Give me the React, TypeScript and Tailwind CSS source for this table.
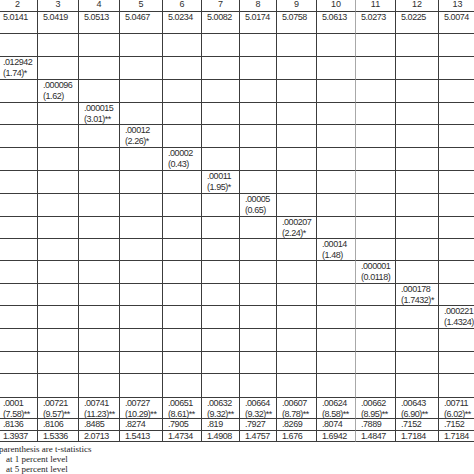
import React from "react";

const cols = [2, 3, 4, 5, 6, 7, 8, 9, 10, 11, 12, 13];

const row1 = ["5.0141", "5.0419", "5.0513", "5.0467", "5.0234", "5.0082", "5.0174", "5.0758", "5.0613", "5.0273", "5.0225", "5.0074"];

const diag: [string, string][] = [
  [".012942", "(1.74)*"],
  [".000096", "(1.62)"],
  [".000015", "(3.01)**"],
  [".00012", "(2.26)*"],
  [".00002", "(0.43)"],
  [".00011", "(1.95)*"],
  [".00005", "(0.65)"],
  [".000207", "(2.24)*"],
  [".00014", "(1.48)"],
  [".000001", "(0.0118)"],
  [".000178", "(1.7432)*"],
  [".000221", "(1.4324)"],
];

const coef: [string, string][] = [
  [".0001", "(7.58)**"],
  [".00721", "(9.57)**"],
  [".00741", "(11.23)**"],
  [".00727", "(10.29)**"],
  [".00651", "(8.61)**"],
  [".00632", "(9.32)**"],
  [".00664", "(9.32)**"],
  [".00607", "(8.78)**"],
  [".00624", "(8.58)**"],
  [".00662", "(8.95)**"],
  [".00643", "(6.90)**"],
  [".00711", "(6.02)**"],
];

const r2 = [".8136", ".8106", ".8485", ".8274", ".7905", ".819", ".7927", ".8269", ".8074", ".7889", ".7152", ".7152"];
const dw = ["1.3937", "1.5336", "2.0713", "1.5413", "1.4734", "1.4908", "1.4757", "1.676", "1.6942", "1.4847", "1.7184", "1.7184"];

function bl(ci: number) {
  return ci === 9 ? "border-l-[#a8a8a8]" : "border-l-[#3c3c3c]";
}

function Cell({ ci, children, last }: { ci: number; children?: React.ReactNode; last?: boolean }) {
  return (
    <div
      className={
        "border-l border-t border-t-[#3c3c3c] pl-[5px] leading-[10px] " +
        bl(ci) +
        (last ? " border-b border-b-[#3c3c3c]" : "")
      }
    >
      {children}
    </div>
  );
}

function Two({ a, b }: { a: string; b: string }) {
  return (
    <div className="leading-[11px]">
      <div>{a}</div>
      <div>{b}</div>
    </div>
  );
}

export default function App() {
  const cells: React.ReactNode[] = [];
  cols.forEach((c, ci) => {
    cells.push(
      <div key={"h" + ci} className={"border-l text-center leading-[9px] tracking-normal " + bl(ci)}>
        {c}
      </div>
    );
  });
  row1.forEach((v, ci) => cells.push(<Cell key={"r1" + ci} ci={ci}>{v}</Cell>));
  cols.forEach((_, ci) => cells.push(<Cell key={"r2" + ci} ci={ci} />));
  diag.forEach((d, ri) => {
    cols.forEach((_, ci) =>
      cells.push(
        <Cell key={"d" + ri + "-" + ci} ci={ci}>
          {ci === ri ? <Two a={d[0]} b={d[1]} /> : null}
        </Cell>
      )
    );
  });
  [0, 1, 2].forEach((k) => cols.forEach((_, ci) => cells.push(<Cell key={"e" + k + "-" + ci} ci={ci} />)));
  coef.forEach((d, ci) =>
    cells.push(
      <Cell key={"c" + ci} ci={ci}>
        <Two a={d[0]} b={d[1]} />
      </Cell>
    )
  );
  r2.forEach((v, ci) => cells.push(<Cell key={"r" + ci} ci={ci}>{v}</Cell>));
  dw.forEach((v, ci) => cells.push(<Cell key={"w" + ci} ci={ci} last>{v}</Cell>));

  return (
    <div className="w-[474px] h-[474px] overflow-hidden bg-white">
      <div
        className="ml-[-3px] grid w-[479px] grid-cols-[40px_41px_41px_43px_39px_38px_37px_40px_39px_40px_43px_38px] grid-rows-[11px_22px_23px_23px_23px_22px_23px_23px_23px_23px_22px_22px_23px_22px_23px_23px_22px_24px_21px_12px_12px] text-[9px] tracking-[-0.45px] text-[#2e2e2e]"
        style={{ fontFamily: '"Liberation Sans", Arial, sans-serif' }}
      >
        {cells}
      </div>
      <div
        className="pt-[2px] text-[9px] leading-[10px] text-[#1e1e1e] whitespace-nowrap"
        style={{ fontFamily: '"Liberation Serif", "Times New Roman", serif' }}
      >
        <div className="ml-[-1px]">parenthesis are t-statistics</div>
        <div className="ml-[6px]">at 1 percent level</div>
        <div className="ml-[6px]">at 5 percent level</div>
      </div>
    </div>
  );
}
